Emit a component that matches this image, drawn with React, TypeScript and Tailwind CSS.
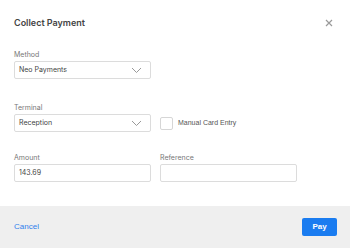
export default function App() {
  return (
    <div className="flex h-[248px] w-[350px] flex-col bg-white font-['Inter',sans-serif] text-[#333]">
      <div className="flex h-[44px] items-center justify-between px-[14px] pt-[2px]">
        <span className="text-[9px] font-semibold text-[#444]">Collect Payment</span>
        <svg width="8" height="8" viewBox="0 0 8 8" className="mr-[3px]">
          <path d="M1 1L7 7M7 1L1 7" stroke="#9a9a9a" strokeWidth="1.2" />
        </svg>
      </div>

      <div className="px-[14px]">
        <div className="mt-[4px] h-[13px] text-[7px] leading-[13px] text-[#777]">Method</div>
        <div className="flex h-[18px] w-[137px] items-center justify-between rounded-[2px] border border-[#dcdcdc] pl-[4px] pr-[8px]">
          <span className="text-[7px] text-[#444]">Neo Payments</span>
          <svg width="11" height="7" viewBox="0 0 11 7">
            <path d="M1 1L5.5 5.5L10 1" stroke="#999" strokeWidth="1" fill="none" />
          </svg>
        </div>

        <div className="mt-[22px] h-[13px] text-[7px] leading-[13px] text-[#777]">Terminal</div>
        <div className="flex items-center gap-[9px]">
          <div className="flex h-[18px] w-[137px] items-center justify-between rounded-[2px] border border-[#dcdcdc] pl-[4px] pr-[8px]">
            <span className="text-[7px] text-[#444]">Reception</span>
            <svg width="11" height="7" viewBox="0 0 11 7">
              <path d="M1 1L5.5 5.5L10 1" stroke="#999" strokeWidth="1" fill="none" />
            </svg>
          </div>
          <div className="h-[13px] w-[13px] rounded-[2px] border border-[#d6d6d6]" />
          <span className="-ml-[4px] font-['Liberation_Sans',sans-serif] text-[7px] text-[#555]">Manual Card Entry</span>
        </div>

        <div className="mt-[19px] flex gap-[9px]">
          <div>
            <div className="h-[13px] text-[7px] leading-[13px] text-[#777]">Amount</div>
            <div className="flex h-[18px] w-[137px] items-center rounded-[2px] border border-[#dcdcdc] pl-[4px]">
              <span className="text-[7px] text-[#444]">143.69</span>
            </div>
          </div>
          <div>
            <div className="h-[13px] text-[7px] leading-[13px] text-[#777]">Reference</div>
            <div className="h-[18px] w-[137px] rounded-[2px] border border-[#dcdcdc]" />
          </div>
        </div>
      </div>

      <div className="mt-auto flex h-[42px] items-center justify-between bg-[#efefef] px-[14px]">
        <span className="font-['Liberation_Sans',sans-serif] text-[8px] text-[#2f80ed]">Cancel</span>
        <button className="mr-[-1px] h-[18px] w-[35px] rounded-[2px] bg-[#1a7cf0] font-['Liberation_Sans',sans-serif] text-[8px] font-bold text-white">
          Pay
        </button>
      </div>
    </div>
  );
}
